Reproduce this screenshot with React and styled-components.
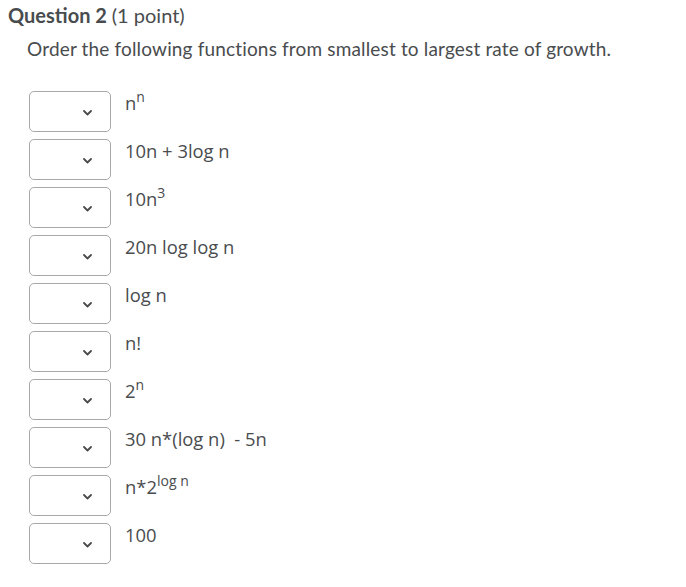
import React from 'react';
import styled, { createGlobalStyle } from 'styled-components';

const GlobalStyle = createGlobalStyle`
  body {
    margin: 0;
    background: #fff;
    font-family: Lato, "Liberation Sans", sans-serif;
    color: #494c4e;
  }
`;

const Page = styled.div`
  padding: 3px 8px 0 8px;
`;

const Title = styled.h2`
  margin: 0;
  font-size: 20px;
  font-weight: 700;
  line-height: 24px;
  color: #494c4e;
  span {
    font-weight: 400;
  }
`;

const Prompt = styled.p`
  margin: 9px 0 0 19px;
  font-size: 19px;
  line-height: 26px;
  letter-spacing: 0.16px;
  color: #494c4e;
`;

const List = styled.div`
  display: flex;
  flex-direction: column;
  gap: 7px;
  margin: 29px 0 0 21px;
`;

const Row = styled.div`
  display: flex;
  align-items: flex-start;
  gap: 14px;
`;

const Select = styled.div`
  width: 82px;
  height: 41px;
  box-sizing: border-box;
  border: 1px solid #a6a9ab;
  border-radius: 5px;
  background: #fff;
  display: flex;
  align-items: center;
  justify-content: flex-end;
  padding-right: 18px;
  padding-top: 2px;
`;

const Label = styled.div`
  font-family: "Open Sans", "Noto Sans", sans-serif;
  font-size: 18.4px;
  line-height: 22px;
  padding-top: 1px;
  color: #494c4e;
  white-space: pre;
  sup {
    font-size: 14px;
    line-height: 0;
    vertical-align: 8px;
  }
`;

const Chevron = () => (
  <svg width="9" height="6" viewBox="0 0 9 6">
    <path d="M1 1l3.5 3.5L8 1" fill="none" stroke="#494c4e" strokeWidth="1.8" strokeLinecap="round" strokeLinejoin="round" />
  </svg>
);

const items = [
  <>n<sup>n</sup></>,
  <>10n + 3log n</>,
  <>10n<sup>3</sup></>,
  <>20n log log n</>,
  <>log n</>,
  <>n!</>,
  <>2<sup>n</sup></>,
  <>30 n*(log n)  - 5n</>,
  <>n*2<sup>log n</sup></>,
  <>100</>,
];

export default function App() {
  return (
    <Page>
      <GlobalStyle />
      <Title>
        Question 2 <span>(1 point)</span>
      </Title>
      <Prompt>Order the following functions from smallest to largest rate of growth.</Prompt>
      <List>
        {items.map((it, i) => (
          <Row key={i}>
            <Select>
              <Chevron />
            </Select>
            <Label>{it}</Label>
          </Row>
        ))}
      </List>
    </Page>
  );
}
